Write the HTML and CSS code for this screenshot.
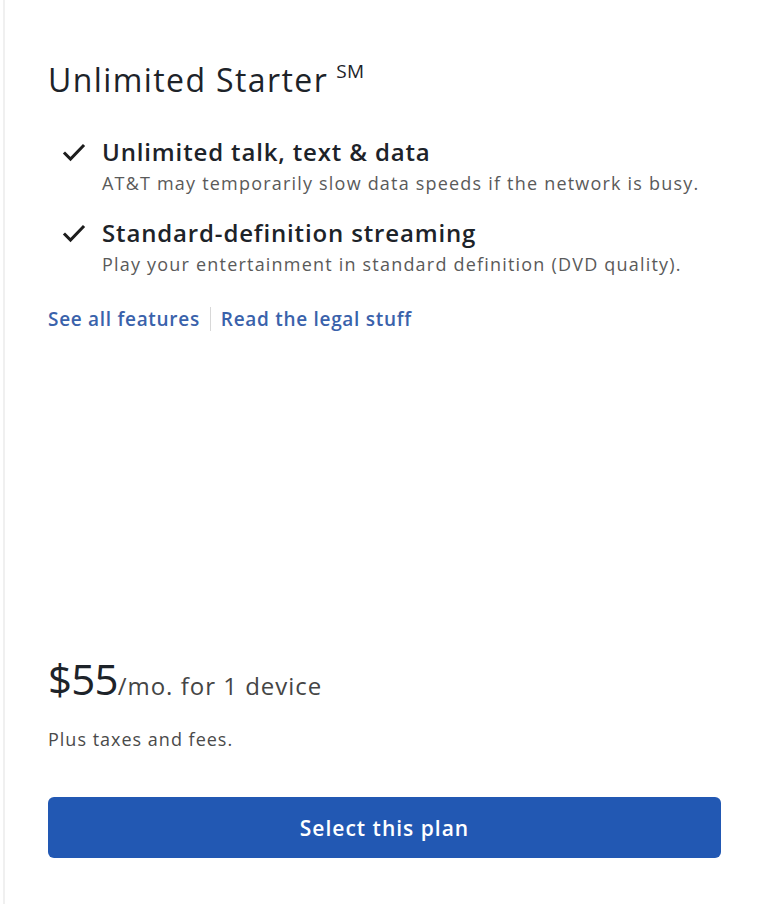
FILE: index.html
```html
<!DOCTYPE html>
<html lang="en">
<head>
<meta charset="utf-8">
<title>Unlimited Starter</title>
<link rel="stylesheet" href="styles.css">
</head>
<body>
<div class="card">
  <h2 class="title"><span class="tname">Unlimited Starter</span><sup class="sm">SM</sup></h2>
  <ul class="features">
    <li class="feature">
      <svg class="check" viewBox="0 0 24 24" width="24" height="24"><path d="M3 12.5l5.5 5.5L21 5" fill="none" stroke="#1d1d1d" stroke-width="3" stroke-linecap="square"/></svg>
      <div class="ftext">
        <div class="fname">Unlimited talk, text &amp; data</div>
        <div class="fdesc">AT&amp;T may temporarily slow data speeds if the network is busy.</div>
      </div>
    </li>
    <li class="feature">
      <svg class="check" viewBox="0 0 24 24" width="24" height="24"><path d="M3 12.5l5.5 5.5L21 5" fill="none" stroke="#1d1d1d" stroke-width="3" stroke-linecap="square"/></svg>
      <div class="ftext">
        <div class="fname">Standard-definition streaming</div>
        <div class="fdesc">Play your entertainment in standard definition (DVD quality).</div>
      </div>
    </li>
  </ul>
  <div class="links">
    <a class="link" href="#">See all features</a>
    <span class="sep"></span>
    <a class="link" href="#">Read the legal stuff</a>
  </div>
  <div class="spacer"></div>
  <div class="price"><span class="amount">$55</span><span class="per">/mo. for 1 device</span></div>
  <div class="taxes">Plus taxes and fees.</div>
  <button class="select">Select this plan</button>
</div>
</body>
</html>
```
FILE: styles.css
```css
html, body {
  margin: 0;
  padding: 0;
  background: #fff;
}
body {
  font-family: "Open Sans", "Noto Sans", sans-serif;
  color: #1d2329;
}
.card {
  margin-left: 3px;
  border-left: 2px solid #f0f0f0;
  height: 904px;
  box-sizing: border-box;
  padding: 58px 47px 46px 43px;
  display: flex;
  flex-direction: column;
}
.title {
  margin: 0;
  font-size: 32px;
  font-weight: 400;
  line-height: 44px;
  letter-spacing: 1.4px;
  display: flex;
  align-items: flex-start;
}
.sm {
  font-size: 19px;
  line-height: 22px;
  margin-left: 8px;
  margin-top: 2px;
  letter-spacing: 0.5px;
}
.features {
  list-style: none;
  margin: 34px 0 0 14px;
  padding: 0;
  display: flex;
  flex-direction: column;
  gap: 21px;
}
.feature {
  display: flex;
  align-items: flex-start;
  gap: 16px;
}
.check {
  margin-top: 5px;
  flex: none;
}
.fname {
  font-size: 24px;
  font-weight: 600;
  line-height: 32px;
  letter-spacing: 0.85px;
}
.fdesc {
  margin-top: 2px;
  font-size: 18px;
  line-height: 26px;
  color: #5a5a5a;
  letter-spacing: 1.2px;
}
.links {
  margin-top: 28px;
  display: flex;
  align-items: center;
  gap: 10px;
}
.link {
  color: #3a62ab;
  font-size: 19px;
  font-weight: 600;
  text-decoration: none;
  line-height: 28px;
  letter-spacing: 0.7px;
}
.sep {
  width: 1px;
  height: 24px;
  background: #d8d8d8;
}
.spacer {
  flex: 1;
}
.price {
  line-height: 48px;
}
.amount {
  font-size: 42px;
  font-weight: 500;
  color: #1d2329;
  letter-spacing: -0.8px;
}
.per {
  font-size: 24px;
  color: #454545;
  letter-spacing: 1px;
}
.taxes {
  margin-top: 13px;
  font-size: 18px;
  line-height: 26px;
  color: #4a4a4a;
  letter-spacing: 1px;
}
.select {
  margin-top: 45px;
  height: 61px;
  border: none;
  border-radius: 6px;
  background: #2258b3;
  color: #fff;
  font-family: "Open Sans", "Noto Sans", sans-serif;
  font-size: 21px;
  font-weight: 600;
  letter-spacing: 1px;
  cursor: pointer;
}
```
